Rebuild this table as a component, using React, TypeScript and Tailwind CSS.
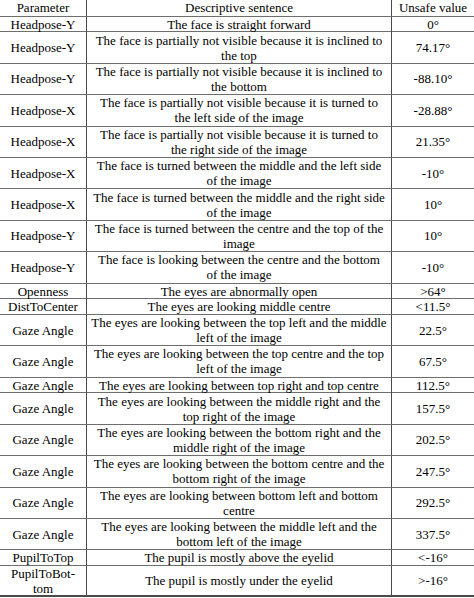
import React from "react";

type Row = { p: React.ReactNode; d: string[]; v: string };

const rows: Row[] = [
  { p: "Headpose-Y", d: ["The face is straight forward"], v: "0°" },
  { p: "Headpose-Y", d: ["The face is partially not visible because it is inclined to", "the top"], v: "74.17°" },
  { p: "Headpose-Y", d: ["The face is partially not visible because it is inclined to", "the bottom"], v: "-88.10°" },
  { p: "Headpose-X", d: ["The face is partially not visible because it is turned to", "the left side of the image"], v: "-28.88°" },
  { p: "Headpose-X", d: ["The face is partially not visible because it is turned to", "the right side of the image"], v: "21.35°" },
  { p: "Headpose-X", d: ["The face is turned between the middle and the left side", "of the image"], v: "-10°" },
  { p: "Headpose-X", d: ["The face is turned between the middle and the right side", "of the image"], v: "10°" },
  { p: "Headpose-Y", d: ["The face is turned between the centre and the top of the", "image"], v: "10°" },
  { p: "Headpose-Y", d: ["The face is looking between the centre and the bottom", "of the image"], v: "-10°" },
  { p: "Openness", d: ["The eyes are abnormally open"], v: ">64°" },
  { p: "DistToCenter", d: ["The eyes are looking middle centre"], v: "<11.5°" },
  { p: "Gaze Angle", d: ["The eyes are looking between the top left and the middle", "left of the image"], v: "22.5°" },
  { p: "Gaze Angle", d: ["The eyes are looking between the top centre and the top", "left of the image"], v: "67.5°" },
  { p: "Gaze Angle", d: ["The eyes are looking between top right and top centre"], v: "112.5°" },
  { p: "Gaze Angle", d: ["The eyes are looking between the middle right and the", "top right of the image"], v: "157.5°" },
  { p: "Gaze Angle", d: ["The eyes are looking between the bottom right and the", "middle right of the image"], v: "202.5°" },
  { p: "Gaze Angle", d: ["The eyes are looking between the bottom centre and the", "bottom right of the image"], v: "247.5°" },
  { p: "Gaze Angle", d: ["The eyes are looking between bottom left and bottom", "centre"], v: "292.5°" },
  { p: "Gaze Angle", d: ["The eyes are looking between the middle left and the", "bottom left of the image"], v: "337.5°" },
  { p: "PupilToTop", d: ["The pupil is mostly above the eyelid"], v: "<-16°" },
  { p: (<>PupilToBot-<br />tom</>), d: ["The pupil is mostly under the eyelid"], v: ">-16°" },
];

export default function App() {
  return (
    <div
      className="w-[474px] h-[598px] bg-white text-black text-[13px] leading-[15px] overflow-hidden"
      style={{ fontFamily: '"Liberation Serif", "Times New Roman", serif' }}
    >
      <div className="grid grid-cols-[87px_305px_82px] h-[16.7px] border-b border-[#6e6e6e] box-border">
        <div className="flex items-center justify-center border-r border-[#4a4a4a]">Parameter</div>
        <div className="flex items-center justify-center border-r border-[#4a4a4a]">Descriptive sentence</div>
        <div className="flex items-center justify-center">Unsafe value</div>
      </div>
      {rows.map((r, i) => {
        const last = i === rows.length - 1;
        const double = r.d.length > 1 || last;
        return (
          <div
            key={i}
            className={
              "grid grid-cols-[87px_305px_82px] box-border " +
              (double ? "h-[31.4px] " : "h-[15.7px] ") +
              (last ? "border-b-2 border-[#4a4a4a]" : "border-b border-[#6e6e6e]")
            }
          >
            <div className="flex items-center justify-center text-center border-r border-[#4a4a4a]">
              <div>{r.p}</div>
            </div>
            <div className="flex items-center justify-center text-center border-r border-[#4a4a4a]">
              <div>
                {r.d.map((l, j) => (
                  <div key={j} className="whitespace-nowrap">{l}</div>
                ))}
              </div>
            </div>
            <div className="flex items-center justify-center">{r.v}</div>
          </div>
        );
      })}
    </div>
  );
}
